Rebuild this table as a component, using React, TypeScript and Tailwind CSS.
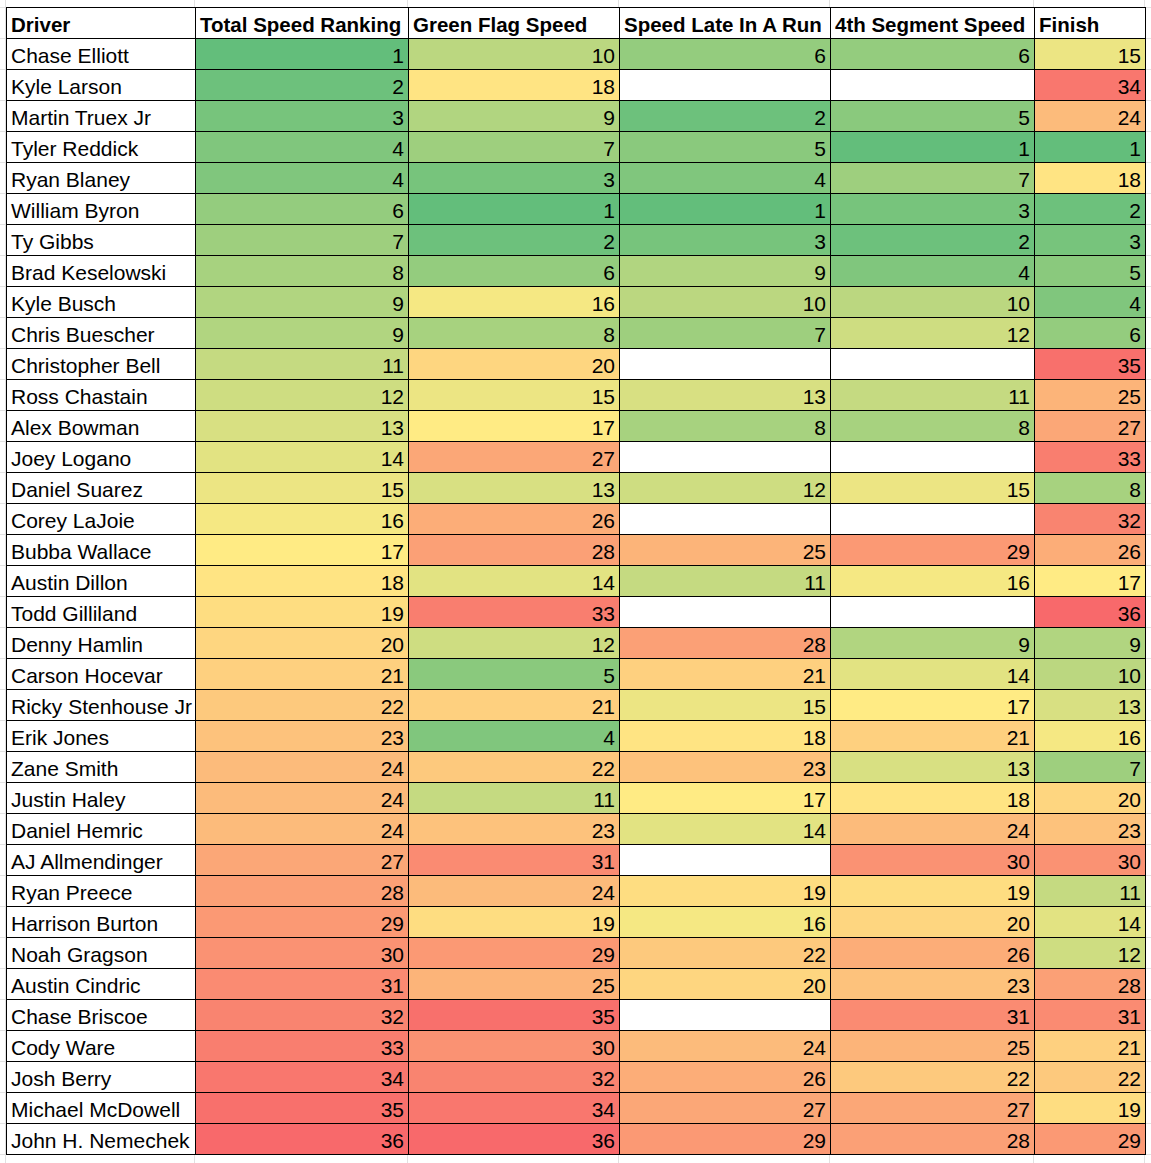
import React from "react"

type Row = [string, number, number, number | null, number | null, number]

const rows: Row[] = [
  ["Chase Elliott", 1, 10, 6, 6, 15],
  ["Kyle Larson", 2, 18, null, null, 34],
  ["Martin Truex Jr", 3, 9, 2, 5, 24],
  ["Tyler Reddick", 4, 7, 5, 1, 1],
  ["Ryan Blaney", 4, 3, 4, 7, 18],
  ["William Byron", 6, 1, 1, 3, 2],
  ["Ty Gibbs", 7, 2, 3, 2, 3],
  ["Brad Keselowski", 8, 6, 9, 4, 5],
  ["Kyle Busch", 9, 16, 10, 10, 4],
  ["Chris Buescher", 9, 8, 7, 12, 6],
  ["Christopher Bell", 11, 20, null, null, 35],
  ["Ross Chastain", 12, 15, 13, 11, 25],
  ["Alex Bowman", 13, 17, 8, 8, 27],
  ["Joey Logano", 14, 27, null, null, 33],
  ["Daniel Suarez", 15, 13, 12, 15, 8],
  ["Corey LaJoie", 16, 26, null, null, 32],
  ["Bubba Wallace", 17, 28, 25, 29, 26],
  ["Austin Dillon", 18, 14, 11, 16, 17],
  ["Todd Gilliland", 19, 33, null, null, 36],
  ["Denny Hamlin", 20, 12, 28, 9, 9],
  ["Carson Hocevar", 21, 5, 21, 14, 10],
  ["Ricky Stenhouse Jr", 22, 21, 15, 17, 13],
  ["Erik Jones", 23, 4, 18, 21, 16],
  ["Zane Smith", 24, 22, 23, 13, 7],
  ["Justin Haley", 24, 11, 17, 18, 20],
  ["Daniel Hemric", 24, 23, 14, 24, 23],
  ["AJ Allmendinger", 27, 31, null, 30, 30],
  ["Ryan Preece", 28, 24, 19, 19, 11],
  ["Harrison Burton", 29, 19, 16, 20, 14],
  ["Noah Gragson", 30, 29, 22, 26, 12],
  ["Austin Cindric", 31, 25, 20, 23, 28],
  ["Chase Briscoe", 32, 35, null, 31, 31],
  ["Cody Ware", 33, 30, 24, 25, 21],
  ["Josh Berry", 34, 32, 26, 22, 22],
  ["Michael McDowell", 35, 34, 27, 27, 19],
  ["John H. Nemechek", 36, 36, 29, 28, 29],
]

const headers = ["Driver", "Total Speed Ranking", "Green Flag Speed", "Speed Late In A Run", "4th Segment Speed", "Finish"]
const widths = ["w-[189px]", "w-[213px]", "w-[211px]", "w-[211px]", "w-[204px]", "w-[111px]"]

const GREEN = [0x63, 0xbe, 0x7b]
const YELLOW = [0xff, 0xeb, 0x84]
const RED = [0xf8, 0x69, 0x6b]

function mix(a: number[], b: number[], t: number) {
  const c = a.map((v, i) => Math.round(v + (b[i] - v) * t))
  return `rgb(${c[0]}, ${c[1]}, ${c[2]})`
}

// one 3-colour scale over every number: min green, median yellow, max red
const all = rows
  .flatMap((r) => r.slice(1) as (number | null)[])
  .filter((v): v is number => v !== null)
  .sort((a, b) => a - b)
const min = all[0]
const max = all[all.length - 1]
const pos = (all.length - 1) * 0.5
const lo = Math.floor(pos)
const mid = all[lo] + (all[lo + 1] - all[lo]) * (pos - lo)

function colour(v: number) {
  if (v <= mid) return mix(GREEN, YELLOW, (v - min) / (mid - min))
  return mix(YELLOW, RED, (v - mid) / (max - mid))
}

export default function App() {
  return (
    <div
      className="min-h-screen w-[1151px] bg-white pl-[6px] pt-[7px] bg-[repeating-linear-gradient(180deg,transparent_0_7px,#e1e1e1_7px_8px,transparent_8px_31px),linear-gradient(90deg,transparent_0_5px,#e1e1e1_5px_6px,transparent_6px_194px,#e1e1e1_194px_195px,transparent_195px_407px,#e1e1e1_407px_408px,transparent_408px_618px,#e1e1e1_618px_619px,transparent_619px_829px,#e1e1e1_829px_830px,transparent_830px_1033px,#e1e1e1_1033px_1034px,transparent_1034px_1144px,#e1e1e1_1144px_1145px,transparent_1145px)]"
      style={{ fontFamily: '"Liberation Sans", Arial, sans-serif' }}
    >
      <table className="w-[1140px] table-fixed border-collapse bg-white text-[21px] text-black">
        <thead>
          <tr>
            {headers.map((h, i) => (
              <th key={h} className={`${widths[i]} h-[31px] overflow-hidden border border-black px-[4px] pt-[4px] text-left text-[20.5px] font-bold leading-[26px] whitespace-nowrap`}>
                {h}
              </th>
            ))}
          </tr>
        </thead>
        <tbody>
          {rows.map((r) => (
            <tr key={r[0]}>
              <td className="h-[31px] border border-black px-[4px] pt-[4px] leading-[26px] whitespace-nowrap">{r[0]}</td>
              {[1, 2, 3, 4, 5].map((c) => {
                const v = r[c] as number | null
                return (
                  <td
                    key={c}
                    className="h-[31px] border border-black px-[4px] pt-[4px] text-right leading-[26px]"
                    style={v === null ? undefined : { backgroundColor: colour(v) }}
                  >
                    {v ?? ""}
                  </td>
                )
              })}
            </tr>
          ))}
        </tbody>
      </table>
    </div>
  )
}
